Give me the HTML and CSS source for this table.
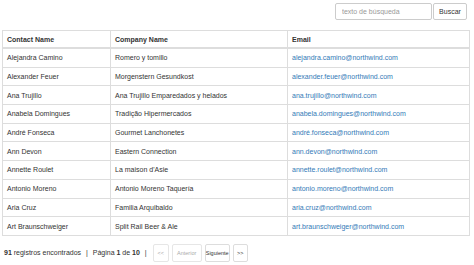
FILE: index.html
```html
<!DOCTYPE html>
<html>
<head>
<meta charset="utf-8">
<link rel="stylesheet" href="styles.css">
</head>
<body>
<div class="page">
  <div class="toolbar">
    <input class="search" type="text" placeholder="texto de búsqueda">
    <button class="btn">Buscar</button>
  </div>
  <table class="grid">
    <colgroup>
      <col class="c1"><col class="c2"><col class="c3">
    </colgroup>
    <thead>
      <tr><th>Contact Name</th><th>Company Name</th><th>Email</th></tr>
    </thead>
    <tbody>
      <tr><td>Alejandra Camino</td><td>Romero y tomillo</td><td><a href="#">alejandra.camino@northwind.com</a></td></tr>
      <tr><td>Alexander Feuer</td><td>Morgenstern Gesundkost</td><td><a href="#">alexander.feuer@northwind.com</a></td></tr>
      <tr><td>Ana Trujillo</td><td>Ana Trujillo Emparedados y helados</td><td><a href="#">ana.trujillo@northwind.com</a></td></tr>
      <tr><td>Anabela Domingues</td><td>Tradição Hipermercados</td><td><a href="#">anabela.domingues@northwind.com</a></td></tr>
      <tr><td>André Fonseca</td><td>Gourmet Lanchonetes</td><td><a href="#">andré.fonseca@northwind.com</a></td></tr>
      <tr><td>Ann Devon</td><td>Eastern Connection</td><td><a href="#">ann.devon@northwind.com</a></td></tr>
      <tr><td>Annette Roulet</td><td>La maison d'Asie</td><td><a href="#">annette.roulet@northwind.com</a></td></tr>
      <tr><td>Antonio Moreno</td><td>Antonio Moreno Taquería</td><td><a href="#">antonio.moreno@northwind.com</a></td></tr>
      <tr><td>Aria Cruz</td><td>Familia Arquibaldo</td><td><a href="#">aria.cruz@northwind.com</a></td></tr>
      <tr><td>Art Braunschweiger</td><td>Split Rail Beer &amp; Ale</td><td><a href="#">art.braunschweiger@northwind.com</a></td></tr>
    </tbody>
  </table>
  <div class="footer">
    <span class="info"><b>91</b> registros encontrados <span class="sep">|</span> Página <b>1</b> de <b>10</b> <span class="sep">|</span></span>
    <div class="pager">
      <button class="pbtn disabled w-first">&lt;&lt;</button>
      <button class="pbtn disabled w-prev">Anterior</button>
      <button class="pbtn w-next">Siguiente</button>
      <button class="pbtn w-last">&gt;&gt;</button>
    </div>
  </div>
</div>
</body>
</html>
```
FILE: styles.css
```css
html, body {
  margin: 0;
  padding: 0;
  background: #fff;
}
.page {
  width: 474px;
  height: 265px;
  font-family: "Liberation Sans", Arial, sans-serif;
  font-size: 7px;
  line-height: 9px;
  color: #333;
  padding: 3px 5px 0 2px;
  box-sizing: border-box;
}
.toolbar {
  display: flex;
  justify-content: flex-end;
  gap: 1px;
  height: 17px;
  margin-bottom: 10px;
  padding-right: 2px;
}
.search {
  width: 97px;
  height: 17px;
  box-sizing: border-box;
  border: 1px solid #ccc;
  border-radius: 2px;
  font-family: inherit;
  font-size: 7px;
  padding: 0 6px;
  color: #555;
  outline: none;
}
.search::placeholder {
  color: #999;
}
.btn {
  width: 34px;
  height: 17px;
  box-sizing: border-box;
  border: 1px solid #ccc;
  border-radius: 2px;
  background: #fff;
  font-family: inherit;
  font-size: 7px;
  color: #333;
  padding: 0;
}
.grid {
  width: 467px;
  border-collapse: collapse;
  table-layout: fixed;
}
.c1 { width: 108px; }
.c2 { width: 177px; }
.c3 { width: 182px; }
.grid th, .grid td {
  border: 1px solid #ddd;
  text-align: left;
  padding: 0 4px;
  white-space: nowrap;
  overflow: hidden;
}
.grid th {
  height: 16px;
  font-weight: bold;
  border-bottom-width: 2px;
}
.grid td {
  height: 17.7px;
}
.grid a {
  color: #337ab7;
  text-decoration: none;
}
.footer {
  display: flex;
  align-items: center;
  margin-top: 8px;
  padding-left: 2px;
  height: 18px;
}
.info b {
  font-weight: bold;
}
.sep {
  margin: 0 3px;
}
.pager {
  display: flex;
  gap: 3px;
  margin-left: 3px;
}
.pbtn {
  height: 18px;
  box-sizing: border-box;
  border: 1px solid #ddd;
  border-radius: 2px;
  background: #fff;
  font-family: inherit;
  font-size: 5.5px;
  color: #333;
  padding: 0;
  text-align: center;
}
.w-first { width: 16px; }
.w-prev { width: 30px; }
.w-next { width: 25px; }
.w-last { width: 15px; }
.pbtn.disabled {
  color: #aaa;
  border-color: #e6e6e6;
}
```
